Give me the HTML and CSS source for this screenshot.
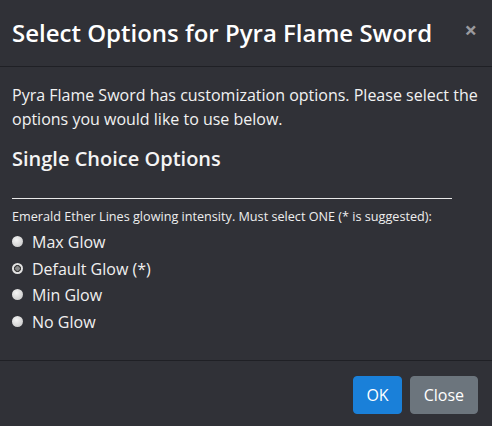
FILE: index.html
```html
<!DOCTYPE html>
<html>
<head>
<meta charset="utf-8">
<link rel="stylesheet" href="styles.css">
</head>
<body>
<div class="modal">
  <div class="modal-header">
    <h4 class="modal-title">Select Options for Pyra Flame Sword</h4>
    <span class="close">&times;</span>
  </div>
  <div class="modal-body">
    <p class="intro">Pyra Flame Sword has customization options. Please select the options you would like to use below.</p>
    <h5 class="section-title">Single Choice Options</h5>
    <div class="rule"></div>
    <div class="question">Emerald Ether Lines glowing intensity. Must select ONE (* is suggested):</div>
    <div class="choices">
      <label class="choice"><span class="radio"></span>Max Glow</label>
      <label class="choice"><span class="radio checked"></span>Default Glow (*)</label>
      <label class="choice"><span class="radio"></span>Min Glow</label>
      <label class="choice"><span class="radio"></span>No Glow</label>
    </div>
  </div>
  <div class="modal-footer">
    <button class="btn btn-primary">OK</button>
    <button class="btn btn-secondary">Close</button>
  </div>
</div>
</body>
</html>
```

FILE: styles.css
```css
html, body {
  margin: 0;
  padding: 0;
  background: #303137;
}
body {
  font-family: "Open Sans", "Liberation Sans", sans-serif;
  color: #f2f2f2;
  width: 492px;
  height: 426px;
  overflow: hidden;
}
.modal {
  display: flex;
  flex-direction: column;
}
.modal-header {
  display: flex;
  justify-content: space-between;
  align-items: flex-start;
  padding: 15px 12px 15px 12px;
  border-bottom: 1px solid #1f2025;
}
.modal-title {
  margin: 0;
  font-size: 24px;
  line-height: 36px;
  font-weight: 600;
  color: #ffffff;
}
.close {
  font-size: 22px;
  line-height: 22px;
  font-weight: 700;
  color: #9a9a9e;
  margin-top: 3px;
  margin-right: 3px;
}
.modal-body {
  padding: 16px 12px 24px 12px;
}
.intro {
  margin: 0 0 16px 0;
  font-size: 16px;
  line-height: 24px;
}
.section-title {
  margin: 0;
  font-size: 20px;
  line-height: 24px;
  font-weight: 600;
  color: #f4f4f4;
}
.rule {
  width: 440px;
  height: 1px;
  background: #e8e8e8;
  margin-top: 27px;
}
.question {
  margin-top: 8px;
  font-size: 12.65px;
  line-height: 18px;
  color: #eeeeee;
}
.choices {
  margin-top: 4px;
  display: flex;
  flex-direction: column;
}
.choice {
  display: flex;
  align-items: center;
  font-size: 16px;
  line-height: 26.67px;
  color: #f0f0f0;
}
.radio {
  width: 11px;
  height: 11px;
  border-radius: 50%;
  background: radial-gradient(circle at 40% 35%, #f4f4f4 0%, #d6d6d6 60%, #b8b8b8 100%);
  margin-right: 9px;
  position: relative;
  top: -1px;
  box-sizing: border-box;
}
.radio.checked {
  background: radial-gradient(circle, #8a8a8a 0 2px, #3e3e3e 2.5px 3.2px, #e2e2e2 3.8px);
}
.modal-footer {
  border-top: 1px solid #1f2025;
  display: flex;
  justify-content: flex-end;
  gap: 8px;
  padding: 15px 14px 12px 12px;
}
.btn {
  font-family: "Open Sans", "Liberation Sans", sans-serif;
  font-size: 16px;
  line-height: 24px;
  padding: 6px 12px;
  border: 1px solid transparent;
  border-radius: 4px;
  color: #ffffff;
  cursor: pointer;
}
.btn-primary {
  background: #1a80d9;
  border-color: #1a80d9;
}
.btn-secondary {
  background: #6c757d;
  border-color: #6c757d;
  padding: 6px 13px;
}
```
